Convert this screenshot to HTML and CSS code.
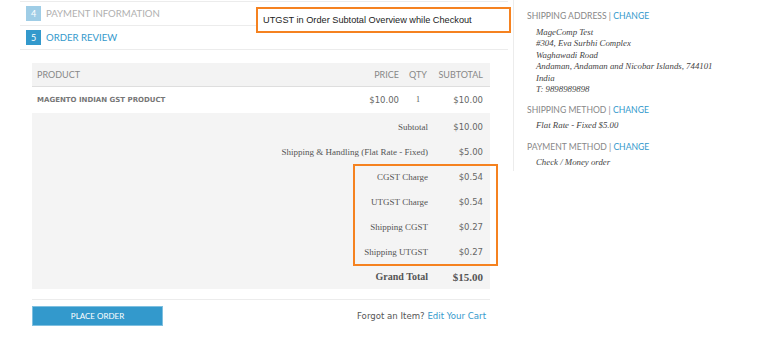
FILE: index.html
```html
<!DOCTYPE html>
<html lang="en">
  <head>
    <meta charset="UTF-8" />
    <meta name="viewport" content="width=device-width, initial-scale=1.0" />
    <title>Checkout - Order Review</title>
    <link rel="stylesheet" href="styles.css">
  </head>
  <body>
    <div class="checkout">
      <div class="main-col">
        <ul class="steps">
          <li class="step">
            <span class="step-num">4</span>
            <span class="step-title">Payment Information</span>
          </li>
          <li class="step active">
            <span class="step-num">5</span>
            <span class="step-title">Order Review</span>
          </li>
        </ul>

        <table class="review-table">
          <thead>
            <tr>
              <th class="col-name">Product</th>
              <th class="col-price">Price</th>
              <th class="col-qty">Qty</th>
              <th class="col-sub">Subtotal</th>
            </tr>
          </thead>
          <tbody>
            <tr class="item-row">
              <td class="col-name">Magento Indian GST Product</td>
              <td class="col-price">$10.00</td>
              <td class="col-qty">1</td>
              <td class="col-sub">$10.00</td>
            </tr>
          </tbody>
          <tfoot>
            <tr class="first-total">
              <td colspan="3" class="t-label">Subtotal</td>
              <td class="t-value">$10.00</td>
            </tr>
            <tr>
              <td colspan="3" class="t-label">Shipping &amp; Handling (Flat Rate - Fixed)</td>
              <td class="t-value">$5.00</td>
            </tr>
            <tr>
              <td colspan="3" class="t-label">CGST Charge</td>
              <td class="t-value">$0.54</td>
            </tr>
            <tr>
              <td colspan="3" class="t-label">UTGST Charge</td>
              <td class="t-value">$0.54</td>
            </tr>
            <tr>
              <td colspan="3" class="t-label">Shipping CGST</td>
              <td class="t-value">$0.27</td>
            </tr>
            <tr>
              <td colspan="3" class="t-label">Shipping UTGST</td>
              <td class="t-value">$0.27</td>
            </tr>
            <tr class="grand-total">
              <td colspan="3" class="t-label">Grand Total</td>
              <td class="t-value">$15.00</td>
            </tr>
          </tfoot>
        </table>

        <div class="review-actions">
          <button class="place-order-btn">Place Order</button>
          <p class="forgot">Forgot an Item? <a href="#">Edit Your Cart</a></p>
        </div>

        <!-- annotations drawn over the screenshot -->
        <div class="note-box">UTGST in Order Subtotal Overview while Checkout</div>
        <div class="highlight-box"></div>
      </div>

      <div class="side-col">
        <h3 class="side-title">Shipping Address | <a href="#">Change</a></h3>
        <address class="side-text address">
          MageComp Test<br />
          #304, Eva Surbhi Complex<br />
          Waghawadi Road<br />
          Andaman, Andaman and Nicobar Islands, 744101<br />
          India<br />
          T: 9898989898
        </address>
        <h3 class="side-title">Shipping Method | <a href="#">Change</a></h3>
        <p class="side-text">Flat Rate - Fixed $5.00</p>
        <h3 class="side-title">Payment Method | <a href="#">Change</a></h3>
        <p class="side-text last">Check / Money order</p>
      </div>
    </div>
  </body>
</html>
```

FILE: styles.css
```css
body {
  margin: 0;
  background: #fff;
  font-family: "DejaVu Sans", Verdana, sans-serif;
  color: #555;
}

a {
  color: #3399cc;
  text-decoration: none;
}

.checkout {
  display: flex;
  align-items: flex-start;
}

.main-col {
  position: relative;
  width: 488px;
  margin-left: 20px;
  padding-bottom: 20px;
}

.steps {
  list-style: none;
  margin: 1px 0 0;
  padding: 0;
  border-bottom: 1px solid #ececec;
}

.step {
  display: flex;
  align-items: center;
  gap: 5px;
  height: 23px;
  padding-left: 6px;
  border-top: 1px solid #ececec;
}

.step-num {
  width: 15px;
  height: 15px;
  line-height: 15px;
  text-align: center;
  font-family: Lato, sans-serif;
  font-size: 9px;
  color: #fff;
  background: #9fcde6;
}

.step-title {
  font-family: Lato, sans-serif;
  font-size: 9.6px;
  text-transform: uppercase;
  color: #b0b0b0;
}

.step.active .step-num {
  background: #3399cc;
}

.step.active .step-title {
  color: #3399cc;
}

.review-table {
  width: 458px;
  margin: 13px 0 0 12px;
  border-collapse: collapse;
  table-layout: fixed;
}

.review-table th,
.review-table td {
  box-sizing: border-box;
  padding: 0;
}

.review-table th {
  height: 23px;
  background: #f3f3f3;
  border-bottom: 1px solid #dedede;
  font-family: Lato, sans-serif;
  font-size: 9px;
  font-weight: normal;
  text-transform: uppercase;
  color: #888;
}

.review-table .col-name {
  text-align: left;
  padding-left: 5px;
}

.review-table .col-price {
  text-align: right;
  width: 64px;
  padding-right: 7px;
}

.review-table .col-qty {
  text-align: center;
  width: 24px;
}

.review-table .col-sub {
  text-align: right;
  width: 60px;
  padding-right: 7px;
}

.item-row td {
  height: 27px;
  font-size: 8.5px;
  color: #666;
}

.item-row .col-name {
  font-size: 7px;
  font-weight: bold;
  text-transform: uppercase;
  color: #777;
}

.item-row .col-qty {
  font-family: "Liberation Serif", serif;
  font-size: 8px;
  color: #555;
}

.review-table tfoot td {
  height: 25px;
  background: #f4f4f4;
}

.review-table tfoot .first-total td {
  height: 26px;
  padding-top: 1px;
}

.t-label {
  text-align: right;
  padding-right: 2px !important;
  font-family: "Liberation Serif", Georgia, serif;
  font-size: 9px;
  color: #555;
}

.t-value {
  text-align: right;
  padding-right: 7px !important;
  font-size: 8.5px;
  color: #666;
}

.grand-total td {
  font-weight: bold;
  color: #555;
}

.grand-total .t-label {
  font-size: 10px;
}

.grand-total .t-value {
  font-family: "Liberation Serif", Georgia, serif;
  font-size: 11px;
}

.review-actions {
  display: flex;
  align-items: center;
  justify-content: space-between;
  width: 458px;
  margin: 10px 0 0 12px;
  padding-top: 6px;
  border-top: 1px solid #ececec;
}

.place-order-btn {
  width: 131px;
  height: 20px;
  padding: 0;
  border: 1px solid #7fc0e0;
  background: #3399cc;
  color: #fff;
  font-family: Lato, sans-serif;
  font-size: 8px;
  text-transform: uppercase;
  cursor: pointer;
}

.forgot {
  margin: 0 4px 0 0;
  font-size: 8.6px;
  color: #555;
}

.note-box {
  position: absolute;
  left: 236px;
  top: 7px;
  width: 246px;
  height: 22px;
  line-height: 22px;
  padding-left: 5px;
  border: 2px solid #f58220;
  background: #fff;
  font-family: "Liberation Sans", Arial, sans-serif;
  font-size: 9.2px;
  color: #222;
}

.highlight-box {
  position: absolute;
  left: 333px;
  top: 164px;
  width: 141px;
  height: 98px;
  border: 2px solid #f58220;
}

.side-col {
  margin-left: 5px;
  padding: 11px 0 3px 13px;
  border-left: 1px solid #ececec;
}

.side-title {
  margin: 0 0 5px;
  font-family: Lato, sans-serif;
  font-size: 8.6px;
  font-weight: normal;
  text-transform: uppercase;
  color: #888;
}

.side-text {
  margin: 0 0 10px 9px;
  font-family: "Liberation Serif", Georgia, serif;
  font-style: italic;
  font-size: 8.8px;
  line-height: 11.4px;
  color: #444;
}

.side-text.address {
  padding-top: 1px;
}

.side-text.last {
  margin-bottom: 0;
}
```
